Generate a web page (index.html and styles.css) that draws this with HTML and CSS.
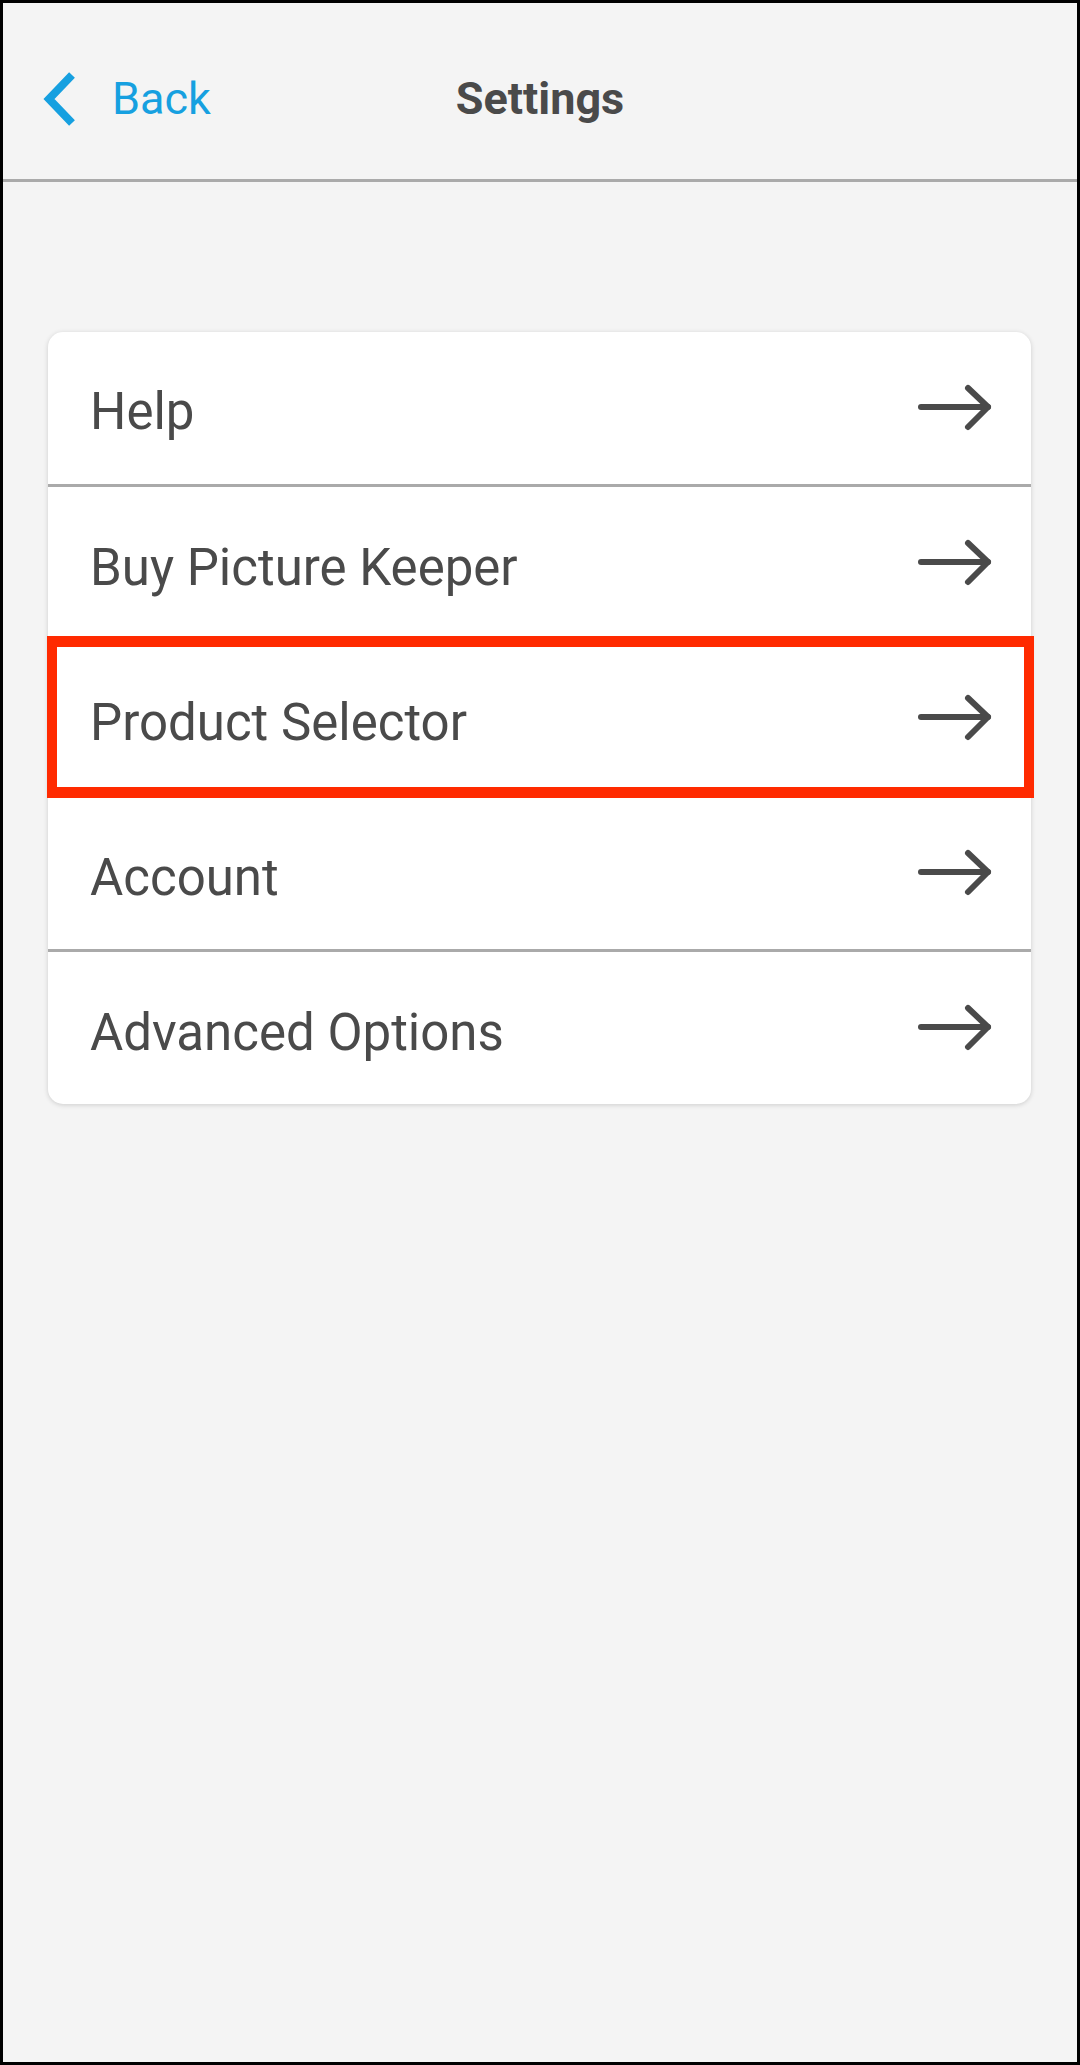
FILE: index.html
```html
<!DOCTYPE html>
<html lang="en">
<head>
<meta charset="utf-8">
<title>Settings</title>
<link rel="stylesheet" href="styles.css">
</head>
<body>
<div class="screen">
  <header class="topbar">
    <div class="back">
      <svg class="chevron" width="36" height="56" viewBox="0 0 36 56" aria-hidden="true">
        <polyline points="32,4 9,28 32,52" fill="none" stroke="#16a0e0" stroke-width="8" stroke-linejoin="miter"/>
      </svg>
      <span class="back-label">Back</span>
    </div>
    <h1 class="title">Settings</h1>
    <div class="spacer"></div>
  </header>

  <main class="content">
    <ul class="card">
      <li class="row"><span class="label">Help</span>
        <svg class="arrow" width="80" height="56" viewBox="0 0 80 56" aria-hidden="true"><line x1="7" y1="27" x2="74" y2="27"/><polyline points="54,8 74,27 54,47"/></svg></li>
      <li class="row"><span class="label">Buy Picture Keeper</span>
        <svg class="arrow" width="80" height="56" viewBox="0 0 80 56" aria-hidden="true"><line x1="7" y1="27" x2="74" y2="27"/><polyline points="54,8 74,27 54,47"/></svg></li>
      <li class="row"><span class="label">Product Selector</span>
        <svg class="arrow" width="80" height="56" viewBox="0 0 80 56" aria-hidden="true"><line x1="7" y1="27" x2="74" y2="27"/><polyline points="54,8 74,27 54,47"/></svg></li>
      <li class="row"><span class="label">Account</span>
        <svg class="arrow" width="80" height="56" viewBox="0 0 80 56" aria-hidden="true"><line x1="7" y1="27" x2="74" y2="27"/><polyline points="54,8 74,27 54,47"/></svg></li>
      <li class="row"><span class="label">Advanced Options</span>
        <svg class="arrow" width="80" height="56" viewBox="0 0 80 56" aria-hidden="true"><line x1="7" y1="27" x2="74" y2="27"/><polyline points="54,8 74,27 54,47"/></svg></li>
      <li class="highlight" aria-hidden="true"></li>
    </ul>
  </main>
</div>
</body>
</html>
```

FILE: styles.css
```css
* { box-sizing: border-box; }

html, body {
  margin: 0;
  padding: 0;
  background: #000;
}

body {
  font-family: Roboto, "Liberation Sans", Arial, sans-serif;
}

.screen {
  width: 1080px;
  height: 2065px;
  border: 3px solid #000;
  background: #f4f4f4;
  overflow: hidden;
}

.topbar {
  height: 179px;
  padding-top: 70px;
  border-bottom: 3px solid #aaaaaa;
  display: grid;
  grid-template-columns: 1fr auto 1fr;
  align-items: start;
}

.back {
  display: flex;
  align-items: center;
  padding-left: 37px;
  height: 52px;
}

.chevron {
  display: block;
  flex: none;
}

.back-label {
  margin-left: 36px;
  font-size: 45px;
  line-height: 52px;
  color: #16a0e0;
}

.title {
  margin: 0;
  font-size: 45px;
  line-height: 52px;
  font-weight: 700;
  color: #4a4a4a;
}

.content {
  padding: 150px 46px 0 45px;
}

.card {
  position: relative;
  list-style: none;
  margin: 0;
  padding: 0;
  width: 983px;
  background: #fff;
  border-radius: 15px;
  box-shadow: 0 1px 5px rgba(0, 0, 0, 0.16);
}

.row {
  height: 152px;
  display: flex;
  align-items: center;
  justify-content: space-between;
  padding: 6px 37px 0 42px;
}

.row + .row {
  border-top: 3px solid #aaaaaa;
  height: 155px;
  padding-top: 9px;
}

.label {
  font-size: 51px;
  color: #4a4a4a;
}

.arrow {
  display: block;
  flex: none;
  margin-top: -6px;
  fill: none;
  stroke: #4a4a4a;
  stroke-width: 6;
  stroke-linecap: round;
  stroke-linejoin: round;
}

.row + .row .arrow {
  margin-top: -9px;
}

.highlight {
  position: absolute;
  top: 304px;
  left: -1px;
  width: 987px;
  height: 162px;
  border-style: solid;
  border-color: #ff2a00;
  border-width: 11px 10px;
}
```
